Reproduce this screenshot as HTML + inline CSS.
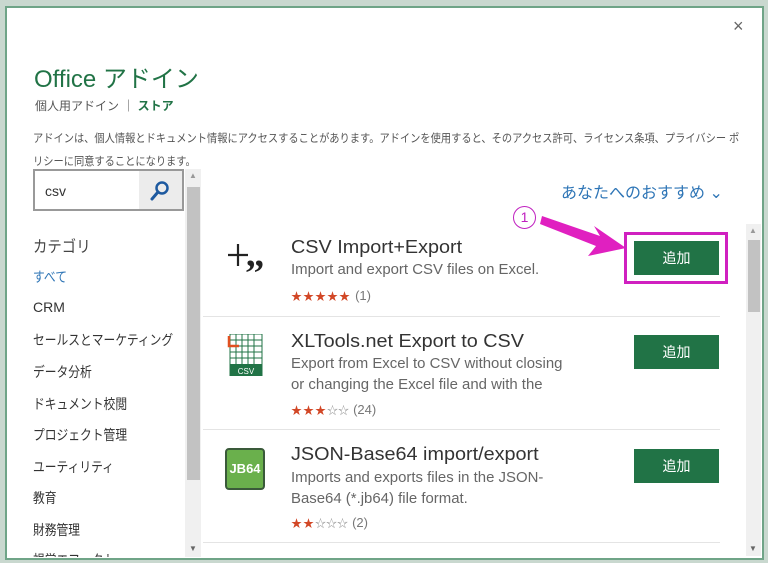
<!DOCTYPE html>
<html><head><meta charset="utf-8"><style>
*{margin:0;padding:0;box-sizing:border-box}
body{width:768px;height:563px;overflow:hidden;background:#c9d8cf;font-family:"Liberation Sans","Noto Sans CJK JP",sans-serif;position:relative}
.a{position:absolute;white-space:nowrap}
.dlg{position:absolute;left:5px;top:6px;width:759px;height:554px;background:#fff;border:2px solid #6fa487}
.cat{font-size:14px;color:#333;left:26px;transform:scaleX(0.84);transform-origin:left}
.btn{position:absolute;left:634px;width:85px;height:34px;background:#217346;color:#fff;font-size:14px;text-align:center;line-height:34px}
.t{font-size:18px;color:#333;left:291px;transform:scaleX(1.1);transform-origin:left}
.d{font-size:14.5px;color:#666;left:291px;line-height:21px;transform:scaleX(1.03);transform-origin:left}
.s{font-size:11px;color:#d24726;left:291px;letter-spacing:1px}
.s span{color:#777;letter-spacing:0;font-size:13px}
.sep{position:absolute;left:203px;width:517px;height:1px;background:#e4e4e4}
.clip{position:absolute;left:7px;top:215px;width:178px;height:342px;overflow:hidden}
</style></head><body>
<div class="dlg"></div>
<div class="a" style="left:733px;top:16px;font-size:18px;color:#666">×</div>
<div class="a" style="left:34px;top:59px;font-size:24px;color:#217346">Office アドイン</div>
<div class="a" style="left:35px;top:97px;font-size:12px;color:#555">個人用アドイン ｜ <b style="color:#217346">ストア</b></div>
<div class="a" style="left:33px;top:130px;font-size:11.5px;color:#555;transform:scaleX(0.89);transform-origin:left">アドインは、個人情報とドキュメント情報にアクセスすることがあります。アドインを使用すると、そのアクセス許可、ライセンス条項、プライバシー ポ</div>
<div class="a" style="left:33px;top:153px;font-size:11.5px;color:#555;transform:scaleX(0.89);transform-origin:left">リシーに同意することになります。</div>
<div class="a" style="left:33px;top:169px;width:151px;height:42px;border:2px solid #999;background:#fff"></div>
<div class="a" style="left:139px;top:171px;width:43px;height:38px;background:#ececec"></div>
<svg class="a" style="left:149px;top:180px" width="22" height="22" viewBox="0 0 22 22"><circle cx="13" cy="8" r="5.5" fill="none" stroke="#1e5aa0" stroke-width="2.5"/><path d="M9 12 L3 19" stroke="#1e5aa0" stroke-width="3" stroke-linecap="round"/></svg>
<div class="a" style="left:45px;top:183px;font-size:14px;color:#333">csv</div>
<div class="a" style="left:185px;top:169px;width:16px;height:388px;background:#f0f0f0"></div>
<div class="a" style="left:187px;top:187px;width:13px;height:293px;background:#c2c2c2"></div>
<div class="a" style="left:189px;top:171px;font-size:8px;color:#999">▲</div>
<div class="a" style="left:189px;top:544px;font-size:8px;color:#666">▼</div>
<div class="clip">
<div class="a" style="left:26px;top:18px;font-size:16px;color:#444;transform:scaleX(0.9);transform-origin:left">カテゴリ</div>
<div class="a cat" style="top:52px;color:#2e75b6">すべて</div>
<div class="a cat" style="top:84px;transform:none">CRM</div>
<div class="a cat" style="top:115px">セールスとマーケティング</div>
<div class="a cat" style="top:147px">データ分析</div>
<div class="a cat" style="top:179px">ドキュメント校閲</div>
<div class="a cat" style="top:210px">プロジェクト管理</div>
<div class="a cat" style="top:242px">ユーティリティ</div>
<div class="a cat" style="top:273px">教育</div>
<div class="a cat" style="top:305px">財務管理</div>
<div class="a cat" style="top:335px">視覚エフェクト</div>
</div>
<div class="a" style="left:561px;top:179px;font-size:16px;color:#2e75b6">あなたへのおすすめ ⌄</div>
<div class="a" style="left:513px;top:206px;width:23px;height:23px;border:1.5px solid #c020c0;border-radius:50%;background:#fff;color:#c020c0;font-size:14px;text-align:center;line-height:20px">1</div>
<svg class="a" style="left:540px;top:210px" width="90" height="50" viewBox="0 0 90 50"><path d="M2 6 L60 26 L54 16 L86 38 L48 46 L56 36 L0 14 Z" fill="#e020c0"/></svg>
<div class="a" style="left:746px;top:224px;width:15px;height:332px;background:#f0f0f0"></div>
<div class="a" style="left:748px;top:240px;width:12px;height:72px;background:#c2c2c2"></div>
<div class="a" style="left:749px;top:226px;font-size:8px;color:#999">▲</div>
<div class="a" style="left:749px;top:544px;font-size:8px;color:#666">▼</div>
<svg class="a" style="left:226px;top:240px" width="44" height="40" viewBox="0 0 44 40"><path d="M12 4V26M2 15H22" stroke="#222" stroke-width="2.2"/></svg>
<div class="a" style="left:246px;top:232px;font-size:38px;font-weight:bold;color:#222;font-family:'Liberation Serif',serif;letter-spacing:-1px">,,</div>
<div class="a t" style="top:237px">CSV Import+Export</div>
<div class="a d" style="top:260px">Import and export CSV files on Excel.</div>
<div class="a s" style="top:288px">★★★★★ <span>(1)</span></div>
<div class="a" style="left:624px;top:232px;width:104px;height:52px;border:3px solid #d020c0"></div>
<div class="btn" style="top:241px">追加</div>
<div class="sep" style="top:316px"></div>
<svg class="a" style="left:226px;top:334px" width="38" height="42" viewBox="0 0 38 42"><rect x="4" y="0" width="32" height="42" fill="#fff" stroke="#217346"/><path d="M4 6H36M4 12H36M4 18H36M4 24H36M10 0V30M16 0V30M22 0V30M28 0V30" stroke="#217346" stroke-width="1"/><rect x="4" y="30" width="32" height="12" fill="#217346"/><text x="20" y="40" font-size="8" fill="#fff" text-anchor="middle" font-family="Liberation Sans">CSV</text><path d="M3 2 V12 H13" stroke="#e05020" stroke-width="2.5" fill="none"/></svg>
<div class="a t" style="top:331px">XLTools.net Export to CSV</div>
<div class="a d" style="top:354px">Export from Excel to CSV without closing<br>or changing the Excel file and with the</div>
<div class="a s" style="top:402px">★★★<span style="color:#999;font-size:11px">☆☆</span> <span>(24)</span></div>
<div class="btn" style="top:335px">追加</div>
<div class="sep" style="top:429px"></div>
<div class="a" style="left:225px;top:448px;width:40px;height:42px;background:#6ab04c;border:2px solid #3a5a3a;border-radius:4px;color:#fff;font-weight:bold;font-size:13px;text-align:center;line-height:38px">JB64</div>
<div class="a t" style="top:444px">JSON-Base64 import/export</div>
<div class="a d" style="top:468px">Imports and exports files in the JSON-<br>Base64 (*.jb64) file format.</div>
<div class="a s" style="top:515px">★★<span style="color:#999;font-size:11px">☆☆☆</span> <span>(2)</span></div>
<div class="btn" style="top:449px">追加</div>
<div class="sep" style="top:542px"></div>
</body></html>
